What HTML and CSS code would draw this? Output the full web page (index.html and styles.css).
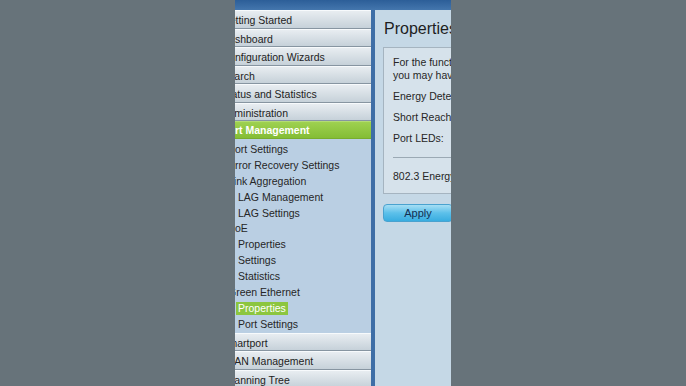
FILE: index.html
```html
<!DOCTYPE html>
<html lang="en">
<head>
  <meta charset="UTF-8">
  <meta name="viewport" content="width=device-width, initial-scale=1.0">
  <title>Green Ethernet Properties</title>
  <link rel="stylesheet" href="styles.css">
</head>
<body>
  <div class="frame">
    <div class="topbar"></div>
    <div class="main">

      <div class="sidebar">
        <ul class="nav">
          <li class="nav-item">Getting Started</li>
          <li class="nav-item">Dashboard</li>
          <li class="nav-item">Configuration Wizards</li>
          <li class="nav-item">Search</li>
          <li class="nav-item">Status and Statistics</li>
          <li class="nav-item">Administration</li>
          <li class="nav-item active">Port Management</li>
          <li class="subnav">
            <ul>
              <li class="lvl1">Port Settings</li>
              <li class="lvl1">Error Recovery Settings</li>
              <li class="lvl1">Link Aggregation</li>
              <li class="lvl2">LAG Management</li>
              <li class="lvl2">LAG Settings</li>
              <li class="lvl1">PoE</li>
              <li class="lvl2">Properties</li>
              <li class="lvl2">Settings</li>
              <li class="lvl2">Statistics</li>
              <li class="lvl1">Green Ethernet</li>
              <li class="lvl2"><span class="current">Properties</span></li>
              <li class="lvl2">Port Settings</li>
            </ul>
          </li>
          <li class="nav-item">Smartport</li>
          <li class="nav-item">VLAN Management</li>
          <li class="nav-item">Spanning Tree</li>
        </ul>
      </div>

      <div class="content">
        <h2 class="page-title">Properties</h2>
        <div class="details">
          <p class="note">For the functions and/or parameters configured on this page to become effective,<br>you may have to enable Green Ethernet on the specific ports.</p>
          <div class="field">Energy Detect Mode:</div>
          <div class="field">Short Reach:</div>
          <div class="field">Port LEDs:</div>
          <hr class="sep">
          <div class="field">802.3 Energy Efficient Ethernet (EEE):</div>
        </div>
        <button type="button" class="apply">Apply</button>
      </div>

    </div>
  </div>
</body>
</html>
```

FILE: styles.css
```css
body {
  margin: 0;
  background-color: #67737a;
  font-family: "Liberation Sans", Arial, sans-serif;
  font-size: 10.5px;
  color: #262626;
}

.frame {
  width: 216px;
  height: 386px;
  margin-left: 235px;
  overflow: hidden;
  display: flex;
  flex-direction: column;
}

.topbar {
  height: 10px;
  flex: none;
  background: linear-gradient(#2c5e98, #4476ad);
}

.main {
  display: flex;
  flex: 1;
}

/* left menu, cut off on the left by the frame */
.sidebar {
  width: 136px;
  flex: none;
  overflow: hidden;
  border-right: 4px solid #3e6ea6;
  background-color: #bacfe3;
}

.nav {
  list-style: none;
  margin: 0 0 0 -22px;
  padding: 0;
  width: 158px;
}

.nav-item {
  height: 18.5px;
  box-sizing: border-box;
  line-height: 18px;
  padding-left: 8.5px;
  white-space: nowrap;
  overflow: hidden;
  border-top: 1px solid #f7fafc;
  border-bottom: 1px solid #8795a1;
  background: linear-gradient(#e8edf1, #c6d1d9);
  color: #222;
}

.nav-item.active {
  height: 18px;
  line-height: 17px;
  border-top: 1px solid #b4dc74;
  border-bottom: 1px solid #78ad2e;
  background: linear-gradient(#9ed150, #84bd35);
  color: #fff;
  font-weight: bold;
}

.subnav ul {
  list-style: none;
  margin: 0;
  padding: 3px 0 0;
}

.subnav li {
  height: 15.9px;
  line-height: 15.9px;
  white-space: nowrap;
}

.lvl1 {
  padding-left: 15px;
}

.lvl2 {
  padding-left: 25px;
}

.current {
  display: inline-block;
  line-height: 13px;
  padding: 0 2px;
  margin-left: -2px;
  background-color: #8cc63f;
  color: #fff;
}

/* page area */
.content {
  width: 400px;
  flex: none;
  padding-left: 8px;
  background-color: #c5d8e6;
}

.page-title {
  margin: 9px 0 8px 1px;
  font-size: 16px;
  line-height: 20px;
  font-weight: normal;
  color: #1e1e1e;
}

.details {
  border: 1px solid #a5b4c0;
  background-color: #d6e2eb;
  padding: 7.5px 9px 9.5px;
  white-space: nowrap;
}

.note {
  margin: 0;
  line-height: 13px;
}

.field {
  margin-top: 8px;
  line-height: 13px;
}

.sep {
  margin: 12px 0 0;
  border: none;
  border-top: 1px solid #9ba9b4;
}

.sep + .field {
  margin-top: 12.5px;
}

.apply {
  margin-top: 10px;
  width: 70px;
  height: 18px;
  padding: 0;
  font-family: inherit;
  font-size: 11px;
  color: #132f52;
  border: 1px solid #4aa2cf;
  border-radius: 4px;
  background: linear-gradient(#a6def4, #5cc0ea 50%, #39ade0);
  cursor: pointer;
}
```
